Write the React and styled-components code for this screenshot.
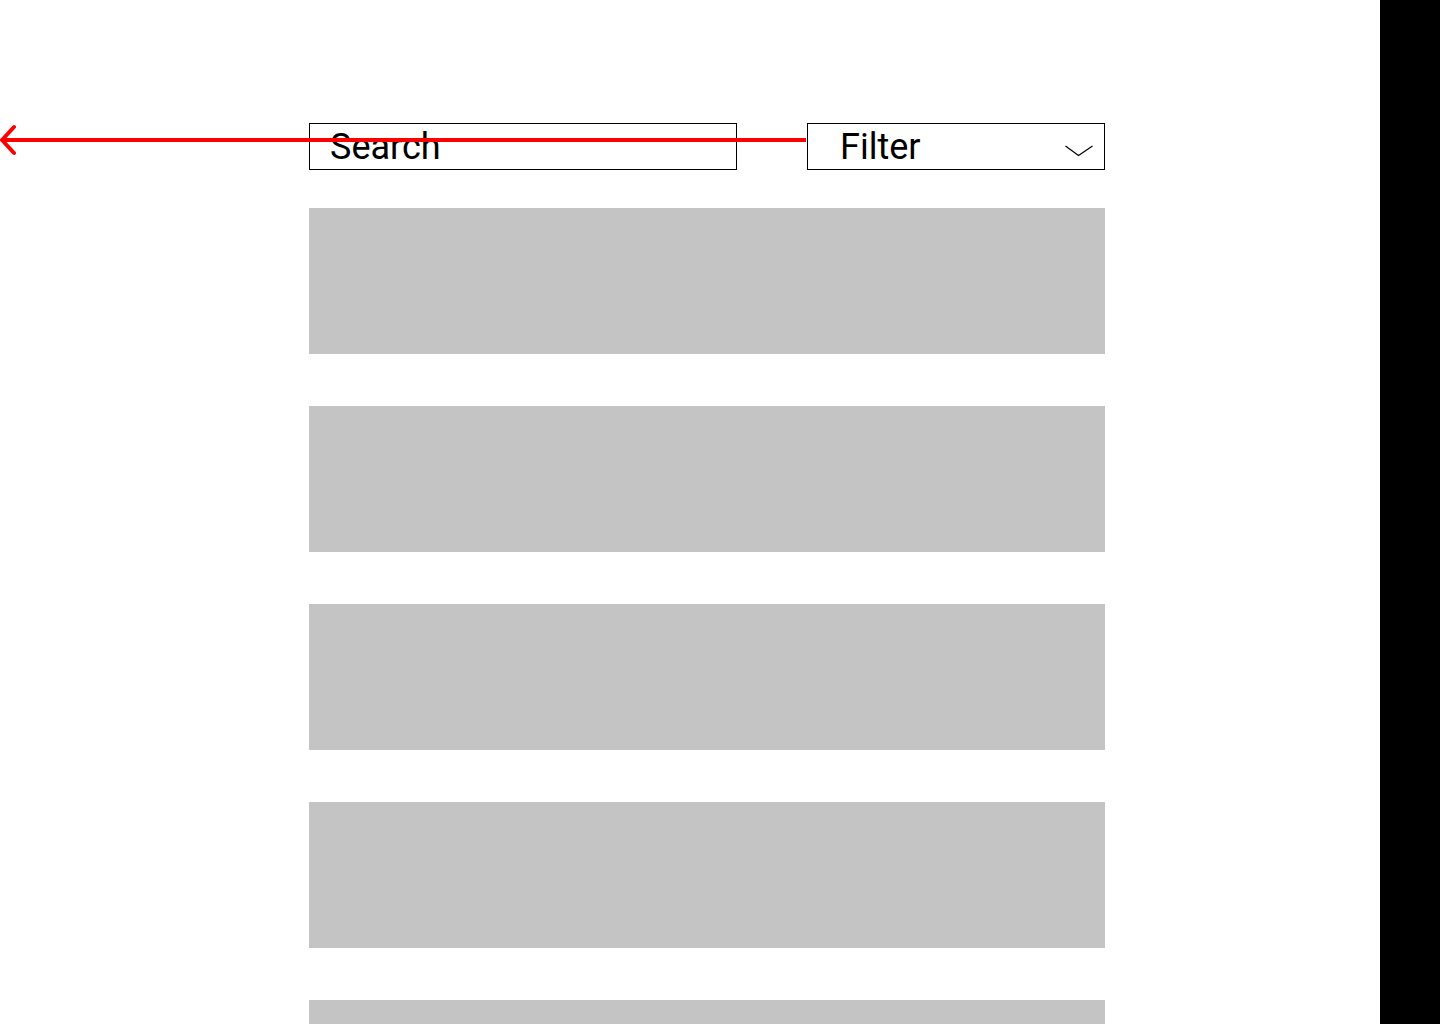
import React from 'react'
import styled, { createGlobalStyle } from 'styled-components'

const GlobalStyle = createGlobalStyle`
  html, body {
    margin: 0;
    padding: 0;
    height: 100%;
    overflow: hidden;
    background: #fff;
  }
  * { box-sizing: border-box; }
`

const Page = styled.div`
  position: relative;
  display: flex;
  height: 100vh;
  overflow: hidden;
  font-family: Roboto, "Liberation Sans", sans-serif;
`

const Main = styled.main`
  flex: 1;
  padding: 123px 0 0 309px;
`

const Column = styled.div`
  width: 796px;
  display: flex;
  flex-direction: column;
`

const SideBar = styled.aside`
  width: 60px;
  background: #000;
`

const Toolbar = styled.div`
  display: flex;
  justify-content: space-between;
  height: 47px;
  margin-bottom: 38px;
`

const SearchInput = styled.input`
  width: 428px;
  height: 100%;
  border: 1px solid #000;
  padding: 0 0 0 20px;
  font-family: Roboto, "Liberation Sans", sans-serif;
  font-size: 36px;
  color: #000;
  background: #fff;
  outline: none;

  &::placeholder {
    color: #000;
    opacity: 1;
  }
`

const FilterBox = styled.div`
  width: 298px;
  height: 100%;
  border: 1px solid #000;
  display: flex;
  align-items: center;
  justify-content: space-between;
  padding: 0 11px 0 32px;
  font-family: Roboto, "Liberation Sans", sans-serif;
  font-size: 36px;
  color: #000;
`

const Chevron = styled.svg`
  width: 28px;
  height: 12px;
  margin-top: 8px;
`

const List = styled.div`
  display: flex;
  flex-direction: column;
  gap: 52px;
`

const Card = styled.div`
  height: 146px;
  background: #c4c4c4;
`

// red back arrow running across the toolbar
const BackArrow = styled.svg`
  position: absolute;
  left: 0;
  top: 124px;
  width: 808px;
  height: 32px;
  pointer-events: none;
`

export default function App() {
  const cards = [1, 2, 3, 4, 5]
  return (
    <Page>
      <GlobalStyle />
      <Main>
        <Column>
          <Toolbar>
            <SearchInput placeholder="Search" />
            <FilterBox>
              <span>Filter</span>
              <Chevron viewBox="0 0 28 12" fill="none">
                <path d="M0.5 1 L13.5 10.5 L27.5 1" stroke="#000" strokeWidth="1.2" />
              </Chevron>
            </FilterBox>
          </Toolbar>
          <List>
            {cards.map((c) => (
              <Card key={c} />
            ))}
          </List>
        </Column>
      </Main>
      <SideBar />
      <BackArrow viewBox="0 0 808 32" fill="none">
        <path d="M2 16 H806" stroke="#ff0000" strokeWidth="4" />
        <path d="M14 3 L2 16 L14 29" stroke="#ff0000" strokeWidth="4" strokeLinecap="round" strokeLinejoin="round" />
      </BackArrow>
    </Page>
  )
}
